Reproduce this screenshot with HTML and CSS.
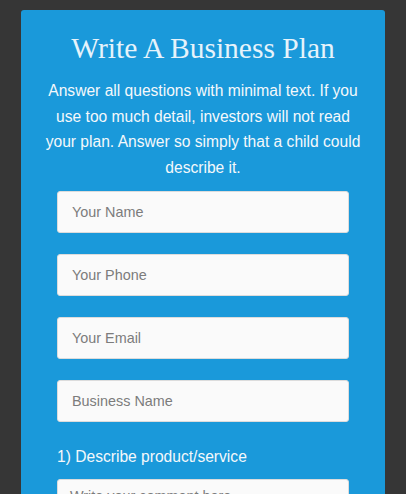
FILE: index.html
```html
<!DOCTYPE html>
<html lang="en">
<head>
    <meta charset="UTF-8">
    <meta name="viewport" content="width=device-width, initial-scale=1.0">
    <title>Write A Business Plan</title>
    <link rel="stylesheet" href="styles.css">
</head>
<body>
    <div class="plan-card">
        <h1 class="plan-title">Write A Business Plan</h1>
        <p class="plan-intro">Answer all questions with minimal text. If you use too much detail, investors will not read your plan. Answer so simply that a child could describe it.</p>

        <form class="plan-form">
            <input type="text" class="plan-input" placeholder="Your Name">
            <input type="text" class="plan-input" placeholder="Your Phone">
            <input type="text" class="plan-input" placeholder="Your Email">
            <input type="text" class="plan-input" placeholder="Business Name">

            <label for="q1" class="plan-label">1) Describe product/service</label>
            <textarea id="q1" class="plan-textarea" placeholder="Write your comment here"></textarea>
        </form>
    </div> <!-- End plan-card -->
</body>
</html>
```

FILE: styles.css
```css
    body{
        margin: 0;
        background-color: #363636;
        font-family: "Liberation Sans", Arial, sans-serif;
        overflow: hidden;
    }
    .plan-card{
        width: 364px;
        margin: 10px auto 0;
        padding: 22px 0 40px;
        background-color: #1a99da;
        border-radius: 3px 3px 0 0;
        color: #fff;
        text-align: center;
    }
    .plan-title{
        margin: 0;
        font: normal 29.5px "Liberation Serif", "Times New Roman", serif;
        color: #e6f3fb;
    }
    .plan-intro{
        margin: 13px 23px 0;
        font-size: 15.6px;
        line-height: 25.5px;
        color: #f4f8fb;
    }
    .plan-form{
        display: flex;
        flex-direction: column;
        padding: 11px 36px 0;
        text-align: left;
    }
    .plan-input{
        box-sizing: border-box;
        height: 42px;
        margin-bottom: 21px;
        padding: 0 14px;
        border: 1px solid #dcdcdc;
        border-radius: 3px;
        background: #fafafa;
        font: 14.4px "Liberation Sans", Arial, sans-serif;
        color: #555;
    }
    .plan-input::placeholder,
    .plan-textarea::placeholder{
        color: #7c7c7c;
        opacity: 1;
    }
    .plan-label{
        margin: 4px 0 12px;
        font-size: 15.6px;
        line-height: 20px;
        color: #f4f8fb;
    }
    .plan-textarea{
        box-sizing: border-box;
        height: 90px;
        padding: 8px 12px;
        border: 1px solid #dcdcdc;
        border-radius: 3px;
        background: #fafafa;
        font: 14.4px "Liberation Sans", Arial, sans-serif;
        resize: none;
    }
```
